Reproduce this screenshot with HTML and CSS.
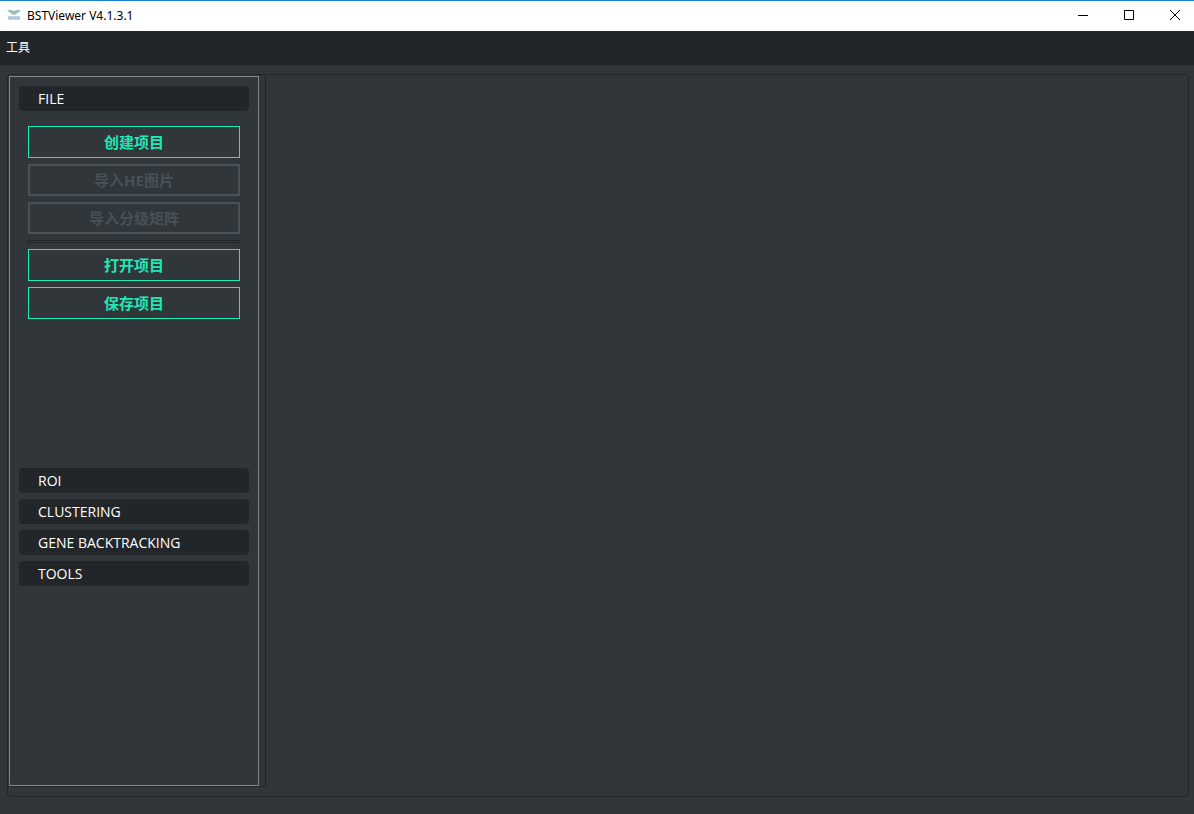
FILE: index.html
```html
<!DOCTYPE html>
<html lang="zh-CN">
<head>
    <meta charset="UTF-8">
    <meta name="viewport" content="width=device-width, initial-scale=1.0">
    <title>BSTViewer V4.1.3.1</title>
    <link rel="stylesheet" href="styles.css">
</head>
<body>

<header class="titlebar">
    <svg class="app-icon" width="14" height="14" viewBox="0 0 14 14" aria-hidden="true">
        <path d="M0 2h5l2 1 2-1h5l-3 3-4 1-4-1z" fill="#9fbfd0"/>
        <path d="M4 2l3 2 3-2-1 3-2 2-2-2z" fill="#a3bd84"/>
        <path d="M5 6h4l1 1H4z" fill="#b9cfe2"/>
        <path d="M1 8h12v4H1z" fill="#bfd5ea"/>
        <path d="M2 9h2v2H2zM5 9h1v2H5zM7 9h2v2H7zM10 9h2v2h-2z" fill="#a3c0dc"/>
    </svg>
    <h1 class="app-title">BSTViewer V4.1.3.1</h1>
    <div class="window-buttons">
        <button class="window-button" type="button" aria-label="最小化">
            <svg width="11" height="11" viewBox="0 0 11 11"><path d="M0 5.5h10" stroke="#000" fill="none"/></svg>
        </button>
        <button class="window-button" type="button" aria-label="最大化">
            <svg width="11" height="11" viewBox="0 0 11 11"><path d="M.5.5h9v9h-9z" stroke="#000" fill="none"/></svg>
        </button>
        <button class="window-button" type="button" aria-label="关闭">
            <svg width="11" height="11" viewBox="0 0 11 11"><path d="M0 0l10 10M10 0L0 10" stroke="#000" fill="none"/></svg>
        </button>
    </div>
</header>

<nav class="menubar">
    <button class="menu-item" type="button">工具</button>
</nav>

<main class="workspace">
    <div class="dock">
        <aside class="toolbox">
            <button class="section-title" type="button" aria-expanded="true">FILE</button>
            <div class="section-page">
                <button class="action" type="button">创建项目</button>
                <button class="action" type="button" disabled>导入HE图片</button>
                <button class="action" type="button" disabled>导入分级矩阵</button>
                <hr class="separator">
                <button class="action" type="button">打开项目</button>
                <button class="action" type="button">保存项目</button>
            </div>
            <button class="section-title" type="button" aria-expanded="false">ROI</button>
            <button class="section-title" type="button" aria-expanded="false">CLUSTERING</button>
            <button class="section-title" type="button" aria-expanded="false">GENE BACKTRACKING</button>
            <button class="section-title" type="button" aria-expanded="false">TOOLS</button>
        </aside>
    </div>
    <section class="canvas"></section>
</main>

</body>
</html>
```
FILE: styles.css
```css
* {
    box-sizing: border-box;
    margin: 0;
    padding: 0;
}

body {
    display: flex;
    flex-direction: column;
    min-height: 100vh;
    background-color: #31363b;
    color: #fff;
    font-family: "Open Sans", "Noto Sans CJK SC", sans-serif;
    font-size: 14px;
}

button {
    font-family: inherit;
    border: none;
    background: none;
    color: inherit;
}

/* Title bar */
.titlebar {
    display: flex;
    align-items: center;
    height: 31px;
    padding: 0 0 2px 7px;
    gap: 6px;
    border-top: 1px solid #1883d7;
    background-color: #fff;
    color: #000;
}

.app-title {
    flex: 1;
    font-family: "Noto Sans", sans-serif;
    font-size: 12px;
    font-weight: normal;
}

.window-buttons {
    display: flex;
}

.window-button {
    display: flex;
    align-items: center;
    justify-content: center;
    width: 46px;
    height: 28px;
    padding-left: 8px;
}

.window-button:hover {
    background-color: #e5e5e5;
}

/* Menu bar */
.menubar {
    display: flex;
    align-items: center;
    height: 34px;
    padding: 0 6px 2px;
    background-color: #232629;
}

.menu-item {
    font-size: 12px;
}

/* Main area */
.workspace {
    flex: 1;
    display: flex;
    margin: 9px 5px 17px 7px;
    border: 1px solid #232629;
    border-radius: 4px;
}

.dock {
    display: flex;
    width: 258px;
    margin-bottom: 9px;
    padding: 1px 6px 0 1px;
    border-right: 1px solid #232629;
    border-bottom: 1px solid #232629;
    border-radius: 4px;
}

.toolbox {
    flex: 1;
    display: flex;
    flex-direction: column;
    gap: 6px;
    padding: 9px;
    border: 1px solid #82868a;
}

.section-title {
    height: 25px;
    padding-left: 19px;
    border-radius: 4px;
    background-color: #232629;
    font-size: 14px;
    line-height: 25px;
    text-align: left;
}

.section-page {
    display: flex;
    flex-direction: column;
    gap: 6px;
    min-height: 345px;
    padding: 9px;
}

.action {
    height: 32px;
    padding-bottom: 2px;
    border: 1px solid #1de9b6;
    color: #1de9b6;
    font-size: 15px;
    font-weight: bold;
}

.action:hover {
    background-color: #232629;
}

.action:disabled {
    border: 2px solid #485158;
    background: none;
    color: #485158;
}

.separator {
    height: 3px;
    border: 1px solid #232629;
}

.canvas {
    flex: 1;
}
```
